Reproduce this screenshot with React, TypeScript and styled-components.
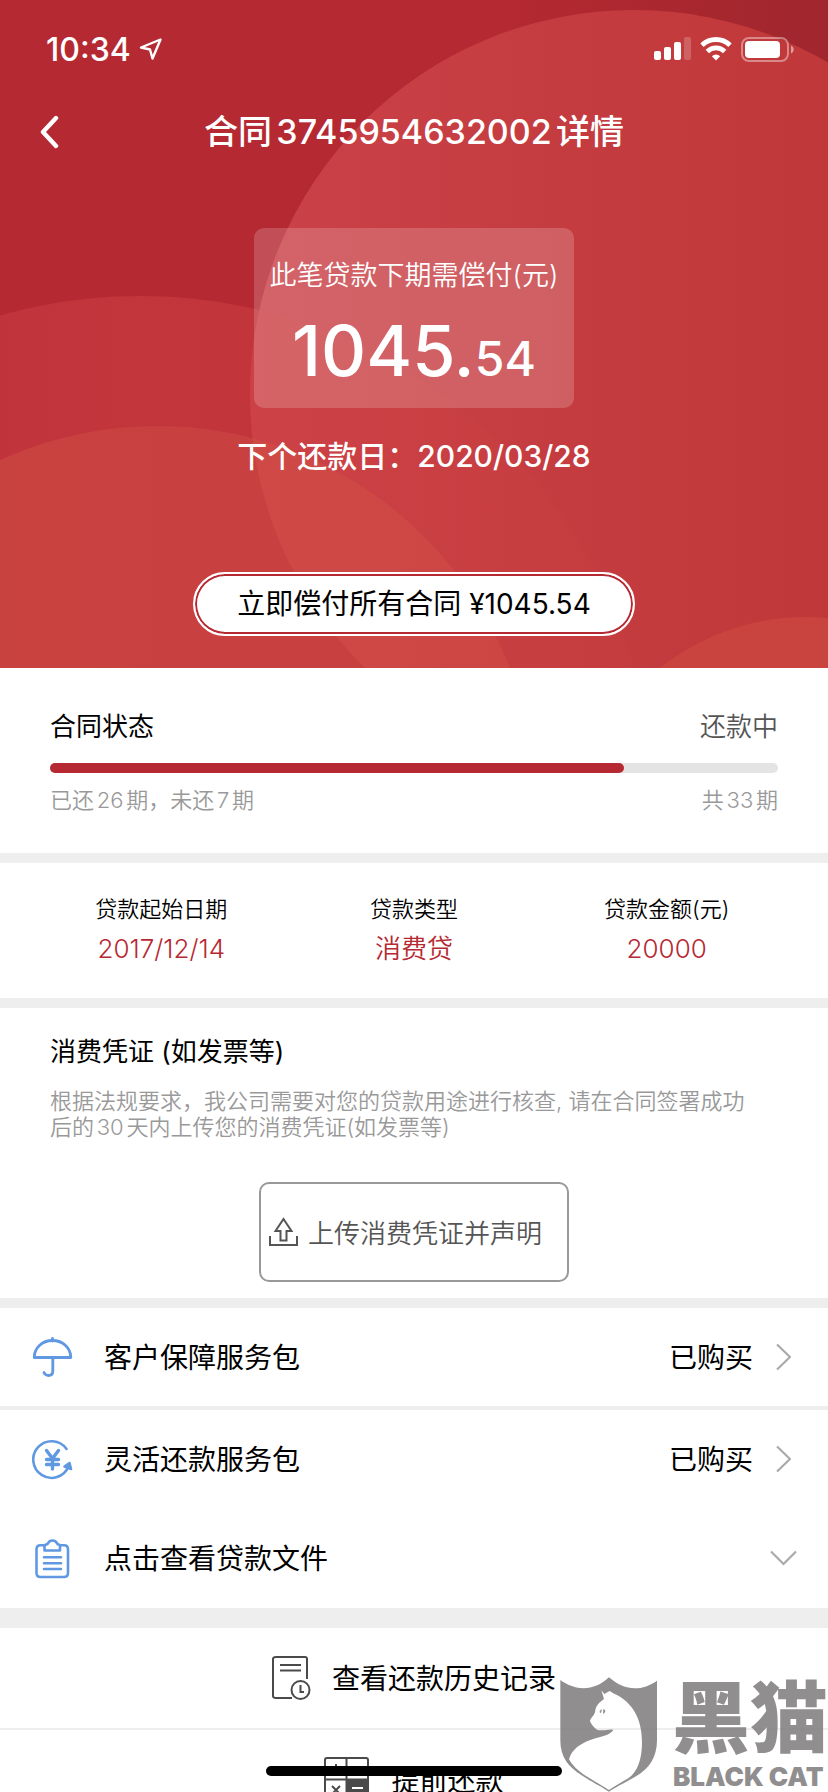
import React from "react";
import styled, { createGlobalStyle } from "styled-components";

const red = "#b62932";
const blue = "#6198e2";

const GlobalStyle = createGlobalStyle`
  *, *::before, *::after { box-sizing: border-box; }
  body {
    margin: 0;
    background: #fff;
    color: #000;
    font-family: Inter, "Noto Sans CJK SC", sans-serif;
    font-size: 28px;
    text-autospace: normal;
  }
  button { font: inherit; color: inherit; background: none; border: 0; padding: 0; margin: 0; cursor: pointer; }
  h1, h2, p, dl, dt, dd { margin: 0; font-weight: 400; }
  svg { display: block; flex: none; }
`;

const Screen = styled.div`
  position: relative;
  height: 100vh;
  overflow: hidden;
`;

const Hero = styled.header`
  position: relative;
  display: flex;
  flex-direction: column;
  align-items: center;
  padding-bottom: 32px;
  color: #fff;
  background: linear-gradient(90deg, #b52932 0%, #b52932 60%, #a0262d 100%);
  overflow: hidden;
`;

const HeroArt = styled.svg`
  position: absolute;
  inset: 0;
  width: 100%;
  height: 100%;
`;

const StatusBar = styled.div`
  position: relative;
  display: flex;
  align-items: center;
  justify-content: space-between;
  width: 100%;
  height: 98px;
  padding: 0 34px 0 46px;
`;

const StatusGroup = styled.div<{ $gap: number }>`
  display: flex;
  align-items: center;
  gap: ${(p) => p.$gap}px;
  font-size: 32px;
  font-weight: 500;
`;

const NavBar = styled.nav`
  position: relative;
  display: grid;
  grid-template-columns: 100px 1fr 100px;
  align-items: center;
  width: 100%;
  height: 68px;
`;

const BackButton = styled.button`
  display: flex;
  padding-left: 38px;
`;

const Title = styled.h1`
  font-size: 34px;
  font-weight: 500;
  line-height: 48px;
  text-align: center;
  white-space: nowrap;
`;

const DueBox = styled.section`
  position: relative;
  display: flex;
  flex-direction: column;
  align-items: center;
  width: 320px;
  height: 180px;
  margin-top: 62px;
  padding-top: 29px;
  border-radius: 10px;
  background: rgba(255, 255, 255, 0.18);
`;

const DueLabel = styled.p`
  font-size: 27px;
  font-weight: 350;
  line-height: 38px;
  white-space: nowrap;
`;

const DueAmount = styled.p`
  margin-top: 14px;
  font-size: 70px;
  font-weight: 500;
  line-height: 84px;
  small { font-size: 48px; }
`;

const DueDate = styled.p`
  position: relative;
  margin-top: 27px;
  font-size: 30px;
  font-weight: 500;
  line-height: 42px;
`;

const PayButton = styled.button`
  position: relative;
  width: 442px;
  height: 64px;
  margin-top: 95px;
  border: 2px solid #fff;
  border-radius: 32px;
  background: #fff;
  box-shadow: inset 0 0 0 2px ${red};
  color: #000;
  font-size: 28px;
  line-height: 40px;
`;

const Section = styled.section<{ $pad: string }>`
  padding: ${(p) => p.$pad};
  border-bottom: 10px solid #eee;
`;

const SplitLine = styled.div`
  display: flex;
  justify-content: space-between;
`;

const Heading = styled.h2`
  font-size: 26px;
  line-height: 38px;
`;

const StatusText = styled.span`
  font-size: 26px;
  font-weight: 350;
  line-height: 38px;
  color: #555;
`;

const Note = styled.span`
  font-size: 22px;
  font-weight: 350;
  line-height: 32px;
  color: #999;
`;

const Track = styled.div`
  height: 10px;
  margin: 17px 0 11px;
  border-radius: 5px;
  background: #e4e4e4;
`;

const Fill = styled.div`
  height: 100%;
  border-radius: 5px;
  background: ${red};
`;

const Facts = styled.dl`
  display: grid;
  grid-template-columns: repeat(3, 1fr);
  text-align: center;
`;

const FactName = styled.dt`
  font-size: 22px;
  font-weight: 350;
  line-height: 32px;
`;

const FactValue = styled.dd`
  margin-top: 4px;
  font-size: 26px;
  font-weight: 350;
  line-height: 40px;
  color: ${red};
`;

const Hint = styled.p`
  margin: 17px 0 42px;
  padding-right: 16px;
  font-size: 22px;
  font-weight: 350;
  line-height: 26px;
  color: #999;
`;

const UploadButton = styled.button`
  display: flex;
  align-items: center;
  gap: 9px;
  width: 310px;
  height: 100px;
  margin: 0 auto;
  padding-left: 8px;
  border: 2px solid #999;
  border-radius: 10px;
  color: #555;
  font-size: 26px;
  font-weight: 350;
  white-space: nowrap;
`;

const ButtonText = styled.span`
  padding-bottom: 2px;
`;

const Row = styled.button<{ $rule?: number }>`
  display: flex;
  align-items: center;
  width: 100%;
  height: ${(p) => 98 + (p.$rule ?? 2)}px;
  padding: 0 30px 0 32px;
  border-bottom: ${(p) => p.$rule ?? 0}px solid #eee;
  text-align: left;
`;

const RowLabel = styled(ButtonText)`
  flex: 1;
  padding-left: 31px;
`;

const RowArrow = styled.span`
  display: flex;
  justify-content: center;
  width: 30px;
  margin-left: 15px;
`;

const Actions = styled.div`
  border-top: 20px solid #eee;
`;

const Action = styled.button`
  display: flex;
  align-items: center;
  justify-content: center;
  gap: 21px;
  width: 100%;
  height: 102px;
  border-bottom: 2px solid #eee;
`;

const HomeIndicator = styled.div`
  position: absolute;
  left: 50%;
  bottom: 16px;
  width: 296px;
  height: 10px;
  margin-left: -148px;
  border-radius: 5px;
  background: #000;
`;

const Watermark = styled.div`
  position: absolute;
  right: 0;
  bottom: 0;
  display: flex;
  gap: 14px;
  color: #858283;
  opacity: 0.9;
`;

const WatermarkText = styled.div`
  display: flex;
  flex-direction: column;
  font-weight: 900;
  white-space: nowrap;
`;

const WatermarkName = styled.span`
  font-size: 78px;
  line-height: 84px;
`;

const WatermarkLatin = styled.span`
  padding-left: 1px;
  font-size: 26px;
  line-height: 31px;
`;

const HeroCircles = () => (
  <HeroArt viewBox="0 0 828 668" preserveAspectRatio="xMidYMid slice" aria-hidden="true">
    <defs>
      <linearGradient id="big" gradientUnits="userSpaceOnUse" x1="250" y1="0" x2="828" y2="0">
        <stop offset="0" stopColor="#ca4148" />
        <stop offset="1" stopColor="#c03839" />
      </linearGradient>
      <linearGradient id="mid" gradientUnits="userSpaceOnUse" x1="0" y1="0" x2="650" y2="0">
        <stop offset="0" stopColor="#c5373e" stopOpacity="0.75" />
        <stop offset="0.35" stopColor="#cf4244" stopOpacity="0.5" />
        <stop offset="1" stopColor="#c93f40" stopOpacity="0.3" />
      </linearGradient>
      <linearGradient id="low" gradientUnits="userSpaceOnUse" x1="0" y1="0" x2="520" y2="0">
        <stop offset="0" stopColor="#c84240" />
        <stop offset="1" stopColor="#c83f40" />
      </linearGradient>
      <linearGradient id="glow" gradientUnits="userSpaceOnUse" x1="250" y1="0" x2="520" y2="0">
        <stop offset="0" stopColor="#cf4947" />
        <stop offset="1" stopColor="#cd4644" />
      </linearGradient>
      <clipPath id="bigClip">
        <circle cx="634" cy="394" r="384" />
      </clipPath>
    </defs>
    <circle cx="634" cy="394" r="384" fill="url(#big)" />
    <circle cx="140" cy="811" r="515" fill="url(#mid)" />
    <circle cx="157" cy="804" r="378" fill="url(#low)" />
    <circle cx="157" cy="804" r="378" fill="url(#glow)" clipPath="url(#bigClip)" />
    <circle cx="805" cy="849" r="232" fill="#c9433f" />
  </HeroArt>
);

const LocationIcon = () => (
  <svg width="24" height="24" viewBox="0 0 24 24" fill="none" stroke="#fff" strokeWidth="2.400" strokeLinejoin="round">
    <path d="M21.500 2.500L2 10.500L11 12.500L13.500 21.500Z" />
  </svg>
);

const SignalIcon = () => (
  <svg width="37" height="24" viewBox="0 0 37 24" fill="#fff">
    <rect x="0" y="14" width="7" height="9" rx="2" />
    <rect x="10" y="10" width="7" height="13" rx="2" />
    <rect x="20" y="5" width="7" height="18" rx="2" />
    <rect x="30" y="0" width="7" height="23" rx="2" opacity="0.2" />
  </svg>
);

const WifiIcon = () => (
  <svg width="32" height="24" viewBox="0 0 32 24" fill="none" stroke="#fff" strokeWidth="4.800">
    <path d="M2 9.200A20 20 0 0 1 30 9.200" transform="translate(0 -1)" />
    <path d="M7.300 15A12.400 12.400 0 0 1 24.700 15" transform="translate(0 -0.500)" />
    <path d="M16 23.500L11.800 19.200A6 6 0 0 1 20.200 19.200Z" fill="#fff" stroke="none" />
  </svg>
);

const BatteryIcon = () => (
  <svg width="53" height="25" viewBox="0 0 53 25">
    <rect x="1" y="1" width="46" height="23" rx="7" fill="none" stroke="#fff" strokeOpacity="0.4" strokeWidth="2" />
    <rect x="4" y="4" width="35" height="17" rx="4" fill="#fff" />
    <path d="M50 8.500C53.600 10 53.600 15 50 16.500Z" fill="#fff" fillOpacity="0.5" />
  </svg>
);

const BackIcon = () => (
  <svg width="22" height="34" viewBox="0 0 22 34" fill="none" stroke="#fff" strokeWidth="4.400" strokeLinecap="round" strokeLinejoin="round">
    <path d="M18 3L5 17L18 31" />
  </svg>
);

const UploadIcon = () => (
  <svg width="30" height="30" viewBox="0 0 30 30" fill="none" stroke="#555" strokeWidth="2">
    <path d="M1 19V28H28V19" />
    <path d="M14.500 2L22.500 14H17.500V23.500H11.500V14H6.500Z" />
  </svg>
);

const UmbrellaIcon = () => (
  <svg width="41" height="41" viewBox="0 0 41 41" fill="none" stroke={blue} strokeWidth="2.800" strokeLinecap="round" strokeLinejoin="round">
    <path d="M2.200 20.500C2.200 11 10 3.500 20.500 3.500S38.800 11 38.800 20.500Z" />
    <path d="M20.500 1.500V4M20.800 20.500V34C20.800 37 19.300 38.500 16.500 38.500C14.300 38.500 12.800 37.300 12 35.500" />
  </svg>
);

const RefundIcon = () => (
  <svg width="41" height="41" viewBox="0 0 41 41" fill="none" stroke={blue} strokeWidth="2.600" strokeLinecap="round" strokeLinejoin="round">
    <path d="M34.500 10A18.300 18.300 0 1 0 36.500 27.500" />
    <path d="M37.500 24L32.500 27.500L39 30Z" fill={blue} />
    <path d="M14.500 11.500L20.500 19.500L26.500 11.500M20.500 19.500V30M14.500 20.500H26.500M14.500 25.500H26.500" strokeWidth="3.400" />
  </svg>
);

const ClipboardIcon = () => (
  <svg width="41" height="41" viewBox="0 0 41 41" fill="none" stroke={blue} strokeWidth="2.600" strokeLinecap="round" strokeLinejoin="round">
    <path d="M12 7.200H8.500Q4.500 7.200 4.500 11.200V35Q4.500 39 8.500 39H32Q36 39 36 35V11.200Q36 7.200 32 7.200H28.500" />
    <path d="M12.500 12.500V7.200L15.500 6Q17 2.500 20.500 2.500T25.500 6L28 7.200V12.500Z" />
    <path d="M12 19.200H29M12 25.200H29M12 31H29" />
  </svg>
);

const ChevronRight = () => (
  <svg width="16" height="28" viewBox="0 0 16 28" fill="none" stroke="#aaa" strokeWidth="2.200">
    <path d="M2 1.500L15 14L2 26.500" />
  </svg>
);

const ChevronDown = () => (
  <svg width="28" height="16" viewBox="0 0 28 16" fill="none" stroke="#aaa" strokeWidth="2.200">
    <path d="M2 1.500L14.500 14L27 1.500" />
  </svg>
);

const HistoryIcon = () => (
  <svg width="39" height="44" viewBox="0 0 39 44" fill="none" stroke="#4a4a4a" strokeWidth="2">
    <path d="M35 23V3Q35 1 33 1H4Q1 1 1 3V40Q1 42 4 42H20" />
    <path d="M8 9H29M8 14.500H29" />
    <circle cx="28.500" cy="34" r="9" />
    <path d="M28.500 29V36H32" />
  </svg>
);

const CalculatorIcon = () => (
  <svg width="46" height="46" viewBox="0 0 46 46" fill="none" stroke="#4a4a4a" strokeWidth="2">
    <rect x="23" y="23" width="21" height="21" fill="#4a4a4a" />
    <rect x="1" y="1" width="43" height="43" rx="2" />
    <path d="M22.500 1V44M1 22.500H44" />
    <path d="M12 7V17M7 12H17M28 12H39M8 29L16 37M16 29L8 37" />
    <path d="M28 31H39M28 36H39" stroke="#fff" />
  </svg>
);

const ShieldCat = () => (
  <svg width="98" height="115" viewBox="57 110 294 345" fill="currentColor" fillRule="evenodd" aria-hidden="true">
    <path
      d="M58 119C105 153 160 153 204 111C250 153 303 153 348 121V300C348 350 325 385 285 408C250 428 225 440 204 454C183 440 158 428 122 405C82 380 58 350 58 300Z
      M181 150L190 161L206 152C215 158 221 161 228 164C285 195 303 250 303 305C303 355 291 393 262 414C240 427 222 437 204 449C185 437 165 426 135 407C110 391 93 374 84 357C92 325 122 308 150 298C180 288 210 284 217 268C205 265 190 272 170 269C160 264 149 250 147 242C150 230 162 226 163 210C166 192 178 185 189 176Z"
    />
    <path d="M176 212Q180 208 183 207L180 217Q176 220 176 212ZM187 206Q194 208 193 213Q191 219 186 221Z" />
  </svg>
);

const services = [
  { icon: <UmbrellaIcon />, label: "客户保障服务包", state: "已购买", rule: 4, arrow: <ChevronRight /> },
  { icon: <RefundIcon />, label: "灵活还款服务包", state: "已购买", rule: 0, arrow: <ChevronRight /> },
  { icon: <ClipboardIcon />, label: "点击查看贷款文件", state: "", arrow: <ChevronDown /> },
];

const facts = [
  ["贷款起始日期", "2017/12/14"],
  ["贷款类型", "消费贷"],
  ["贷款金额(元)", "20000"],
];

const paid = 26;
const total = 33;

export default function App() {
  return (
    <Screen>
      <GlobalStyle />
      <Hero>
        <HeroCircles />
        <StatusBar>
          <StatusGroup $gap={8}>
            <span>10:34</span>
            <LocationIcon />
          </StatusGroup>
          <StatusGroup $gap={9}>
            <SignalIcon />
            <WifiIcon />
            <BatteryIcon />
          </StatusGroup>
        </StatusBar>
        <NavBar>
          <BackButton type="button" aria-label="返回">
            <BackIcon />
          </BackButton>
          <Title>合同3745954632002详情</Title>
        </NavBar>
        <DueBox>
          <DueLabel>此笔贷款下期需偿付(元)</DueLabel>
          <DueAmount>
            1045.<small>54</small>
          </DueAmount>
        </DueBox>
        <DueDate>下个还款日：2020/03/28</DueDate>
        <PayButton type="button">立即偿付所有合同 ¥1045.54</PayButton>
      </Hero>

      <Section $pad="40px 50px 37px">
        <SplitLine>
          <Heading>合同状态</Heading>
          <StatusText>还款中</StatusText>
        </SplitLine>
        <Track role="progressbar" aria-label="合同状态" aria-valuemin={0} aria-valuemax={total} aria-valuenow={paid}>
          <Fill style={{ width: `${(paid / total) * 100}%` }} />
        </Track>
        <SplitLine>
          <Note>已还{paid}期，未还{total - paid}期</Note>
          <Note>共{total}期</Note>
        </SplitLine>
      </Section>

      <Section $pad="30px 35px 29px">
        <Facts>
          {facts.map(([name, value]) => (
            <div key={name}>
              <FactName>{name}</FactName>
              <FactValue>{value}</FactValue>
            </div>
          ))}
        </Facts>
      </Section>

      <Section $pad="25px 50px 16px">
        <Heading>消费凭证 (如发票等)</Heading>
        <Hint>根据法规要求，我公司需要对您的贷款用途进行核查, 请在合同签署成功后的30天内上传您的消费凭证(如发票等)</Hint>
        <UploadButton type="button">
          <UploadIcon />
          <ButtonText>上传消费凭证并声明</ButtonText>
        </UploadButton>
      </Section>

      {services.map((s) => (
        <Row key={s.label} type="button" $rule={s.rule}>
          {s.icon}
          <RowLabel>{s.label}</RowLabel>
          <ButtonText>{s.state}</ButtonText>
          <RowArrow>{s.arrow}</RowArrow>
        </Row>
      ))}

      <Actions>
        <Action type="button">
          <HistoryIcon />
          <ButtonText>查看还款历史记录</ButtonText>
        </Action>
        <Action type="button">
          <CalculatorIcon />
          <ButtonText>提前还款</ButtonText>
        </Action>
      </Actions>

      <HomeIndicator />
      <Watermark>
        <ShieldCat />
        <WatermarkText>
          <WatermarkName>黑猫</WatermarkName>
          <WatermarkLatin>BLACK CAT</WatermarkLatin>
        </WatermarkText>
      </Watermark>
    </Screen>
  );
}
